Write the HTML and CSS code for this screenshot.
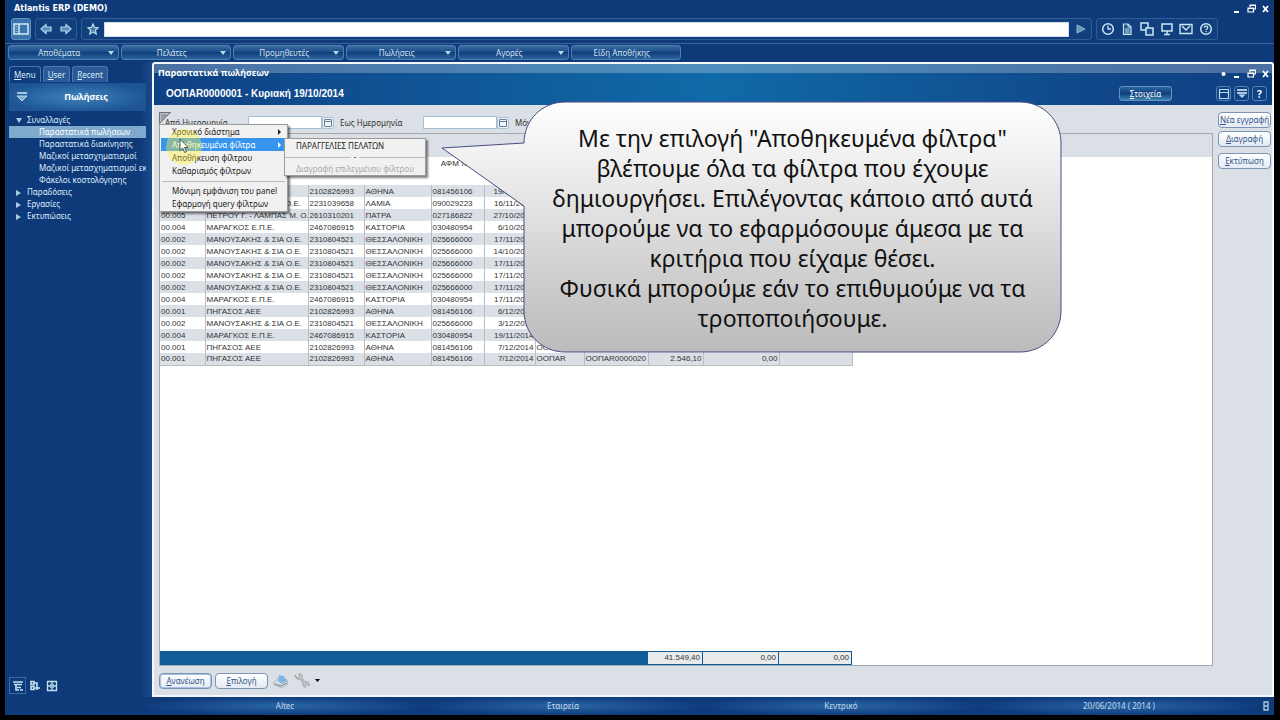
FILE: index.html
```
<!DOCTYPE html>
<html lang="el">
<head>
<meta charset="utf-8">
<title>Atlantis ERP (DEMO)</title>
<link rel="stylesheet" href="styles.css">
</head>
<body>
<svg class="defs" aria-hidden="true">
  <symbol id="i-min" viewBox="0 0 9 9"><path d="M1 8h5" stroke="currentColor" stroke-width="2" fill="none"/></symbol>
  <symbol id="i-restore" viewBox="0 0 9 9"><path d="M3 3V1h5.500v4H6.500M1 4h5.500v4H1zM3 1.500h5.500M1 4.500h5.500" stroke="currentColor" stroke-width="1.200" fill="none"/></symbol>
  <symbol id="i-close" viewBox="0 0 9 9"><path d="M2 2l5 6M7 2l-5 6" stroke="currentColor" stroke-width="1.800" fill="none"/></symbol>
  <symbol id="i-arrow" viewBox="0 0 12 12"><path d="M1 6L6 1.500v2.500h5v4H6v2.500z" fill="#5c8fb8" stroke="#b5d5ea" stroke-width="1.200"/></symbol>
  <symbol id="i-cal" viewBox="0 0 12 12"><rect x=".5" y=".5" width="11" height="11" rx="1.500" fill="#edf4f9" stroke="#a9c2d6"/><path d="M2.500 2.500h7v7h-7zM2.500 4.500h7" fill="none" stroke="#6c7f94"/></symbol>
</svg>
<div class="app">
  <header class="titlebar">
    <h1>Atlantis ERP (DEMO)</h1>
    <div class="winctl">
      <button aria-label="Minimize"><svg><use href="#i-min"/></svg></button>
      <button aria-label="Restore"><svg><use href="#i-restore"/></svg></button>
      <button aria-label="Close"><svg><use href="#i-close"/></svg></button>
    </div>
  </header>

  <div class="toolbar">
    <button class="panel-toggle" aria-label="Panel"><svg viewBox="0 0 16 12"><path d="M1 1h14v10H1zM6 1v10" fill="none" stroke="#d5eaf6" stroke-width="1.500"/><path d="M2.500 3.500h2M2.500 6h2M2.500 8.500h2" stroke="#9cc6e0"/></svg></button>
    <div class="group nav">
      <button aria-label="Back"><svg><use href="#i-arrow"/></svg></button>
      <button aria-label="Forward"><svg class="flip"><use href="#i-arrow"/></svg></button>
    </div>
    <div class="group address">
      <button aria-label="Favorite"><svg viewBox="0 0 12 12"><path d="M6 1l1.500 3.500 3.500.3-2.700 2.400.9 3.800L6 9l-3.200 2 .9-3.800L1 4.800l3.500-.3z" fill="#47799f" stroke="#b5d5ea" stroke-width="1.300"/></svg></button>
      <input type="text" aria-label="Address">
      <button aria-label="Go"><svg viewBox="0 0 12 12"><path d="M2 2l8 4-8 4z" fill="#6897b7" stroke="#8db7d0"/></svg></button>
    </div>
    <div class="group tools">
      <button aria-label="History"><svg viewBox="0 0 14 14"><circle cx="7" cy="7" r="5.300" fill="none" stroke="#cbe6f2" stroke-width="1.500"/><path d="M7 3.500V7h3" fill="none" stroke="#cbe6f2" stroke-width="1.300"/></svg></button>
      <button aria-label="Document"><svg viewBox="0 0 14 14"><path d="M3.500 2H8l3 3v7.500H3.500z" fill="#1d558f" stroke="#cbe6f2" stroke-width="1.200"/><path d="M8 2v3h3M5 7h4.500M5 9h4.500M5 11h4.500" fill="none" stroke="#cbe6f2"/></svg></button>
      <button aria-label="Windows"><svg viewBox="0 0 14 14"><path d="M1 1h7v7H1z" fill="none" stroke="#cbe6f2" stroke-width="1.500"/><path d="M6 6h7v7H6z" fill="#1d4c8b" stroke="#cbe6f2" stroke-width="1.500"/></svg></button>
      <button aria-label="Desktop"><svg viewBox="0 0 14 14"><path d="M2 2h10v7H2zM7 9v3M4 12.500h6" fill="none" stroke="#cbe6f2" stroke-width="1.500"/></svg></button>
      <button aria-label="Mail"><svg viewBox="0 0 14 14"><path d="M1 2.500h12v9H1zM3 4l4 4 4-4" fill="none" stroke="#cbe6f2" stroke-width="1.400"/></svg></button>
      <button aria-label="Help"><svg viewBox="0 0 14 14"><circle cx="7" cy="7" r="5.300" fill="none" stroke="#cbe6f2" stroke-width="1.500"/><path d="M5.300 5.800c0-2.300 3.500-2.200 3.500-.1C8.800 6.900 7 6.900 7 8.200M7 9v1.300" fill="none" stroke="#cbe6f2" stroke-width="1.200"/></svg></button>
    </div>
  </div>

  <nav class="menubar">
    <button class="drop">Αποθέματα</button>
    <button class="drop">Πελάτες</button>
    <button class="drop">Προμηθευτές</button>
    <button class="drop">Πωλήσεις</button>
    <button class="drop">Αγορές</button>
    <button>Είδη Αποθήκης</button>
  </nav>

  <div class="workspace">
    <aside class="sidebar">
      <div class="tabs">
        <button class="on"><u>M</u>enu</button>
        <button><u>U</u>ser</button>
        <button><u>R</u>ecent</button>
      </div>
      <div class="section">
        <svg viewBox="0 0 12 10"><path d="M1 1h10" stroke="#d5eaf6" stroke-width="1.500"/><path d="M1 4h10L6 9z" fill="#7fb0d0" stroke="#b5d8ea"/></svg>
        <h2>Πωλήσεις</h2>
      </div>
      <ul class="tree">
        <li class="open">Συναλλαγές
          <ul>
            <li class="sel">Παραστατικά πωλήσεων</li>
            <li>Παραστατικά διακίνησης</li>
            <li>Μαζικοί μετασχηματισμοί</li>
            <li>Μαζικοί μετασχηματισμοί εκκ</li>
            <li>Φάκελοι κοστολόγησης</li>
          </ul>
        </li>
        <li class="shut">Παραδόσεις</li>
        <li class="shut">Εργασίες</li>
        <li class="shut">Εκτυπώσεις</li>
      </ul>
      <div class="views">
        <button class="on" aria-label="Tree view"><svg viewBox="0 0 12 12"><path d="M1 2h10M2 4.500h8M4 5v5h3M5 7.500h4M8 10h3" fill="none" stroke="#c5e3ee" stroke-width="1.600"/></svg></button>
        <button aria-label="List view"><svg viewBox="0 0 12 12"><path d="M2 1.500h3v3H2zM2 6.500h3v3H2zM5 3h3v5M6 8h5M8 6v4" fill="none" stroke="#c5e3ee" stroke-width="1.600"/></svg></button>
        <button aria-label="Expand"><svg viewBox="0 0 12 12"><path d="M1.500 1.500h9v9h-9zM6 1v3M6 8v3M1 6h3M8 6h3" fill="none" stroke="#c5e3ee" stroke-width="1.300"/><path d="M4 4h4v4H4z" fill="#8fc0d2"/></svg></button>
      </div>
    </aside>

    <main class="doc">
      <div class="doc-title">
        <h2>Παραστατικά πωλήσεων</h2>
        <div class="winctl">
          <button aria-label="Pin"><svg viewBox="0 0 9 9"><circle cx="4.500" cy="5" r="2" fill="currentColor"/></svg></button>
          <button aria-label="Minimize"><svg><use href="#i-min"/></svg></button>
          <button aria-label="Restore"><svg><use href="#i-restore"/></svg></button>
          <button aria-label="Close"><svg><use href="#i-close"/></svg></button>
        </div>
      </div>
      <div class="doc-head">
        <h3>ΟΟΠΑR0000001 - Κυριακή 19/10/2014</h3>
        <button class="details"><u>Σ</u>τοιχεία</button>
        <div class="head-icons">
          <button aria-label="Layout"><svg viewBox="0 0 12 12"><path d="M1.500 1.500h9v9h-9zM1.500 4.500h9" fill="none" stroke="#b9d9ec" stroke-width="1.200"/></svg></button>
          <button aria-label="Filter"><svg viewBox="0 0 12 12"><path d="M1 2h10M1 5h10" stroke="#e3f2fa" stroke-width="1.400"/><path d="M2.500 6.500h7L6 10z" fill="#b9d9ec"/></svg></button>
          <button aria-label="Help">?</button>
        </div>
      </div>
      <div class="doc-body">
        <div class="main-col">
          <form class="filters">
            <svg class="corner" viewBox="0 0 12 12"><path d="M.5.5h11L.5 11.500z" fill="#b9bec4" stroke="#6c7178"/><path d="M2 3h6M2 5h4M2 7h2" stroke="#777"/></svg>
            <label for="from">Από Ημερομηνία</label>
            <input id="from" type="text"><button type="button" aria-label="Calendar"><svg><use href="#i-cal"/></svg></button>
            <label for="to">Εως Ημερομηνία</label>
            <input id="to" type="text"><button type="button" aria-label="Calendar"><svg><use href="#i-cal"/></svg></button>
            <label>Μόν</label>
          </form>
          <div class="grid">
            <div class="band"></div>
            <table>
              <colgroup><col class="c1"><col class="c2"><col class="c3"><col class="c4"><col class="c5"><col class="c6"><col class="c7"><col class="c8"><col class="c9"><col class="c10"><col class="c11"></colgroup>
              <thead><tr><th></th><th></th><th></th><th></th><th>ΑΦΜ πελ</th><th></th><th></th><th></th><th></th><th></th><th></th></tr></thead>
              <tbody id="rows"></tbody>
            </table>
            <div class="totals"><span></span><output>41.549,40</output><output>0,00</output><output>0,00</output></div>
          </div>
          <div class="actions">
            <button class="pill focus"><u>Α</u>νανέωση</button>
            <button class="pill"><u>Ε</u>πιλογή</button>
            <button class="ico" aria-label="Print"><svg viewBox="0 0 16 16"><path d="M1 9l6-5 7 3 1 4-6 4-8-3z" fill="#d9dde0" stroke="#a5abb1" stroke-width=".7"/><path d="M6 2l5 1 3 5-5 3-4-3z" fill="#7db9e4"/><path d="M2 11l6 2 6-3" stroke="#7b8289" fill="none"/></svg></button>
            <button class="ico wide" aria-label="Tools"><svg viewBox="0 0 16 16"><path d="M1 2l3 3 2-2-2-2c4-1 5 2 4 4l3 4c3-1 5 1 4 4l-2-2-2 2 1 1c-3 0-4-2-3-4L6 6C3 7 1 5 1 2z" fill="#c3c5c7" stroke="#8f9397" stroke-width=".7"/></svg><svg class="caret" viewBox="0 0 5 3"><path d="M0 0h5L2.500 3z"/></svg></button>
          </div>
        </div>
        <div class="side-actions">
          <button class="pill"><u>Ν</u>έα εγγραφή</button>
          <button class="pill"><u>Δ</u>ιαγραφή</button>
          <button class="pill last"><u>Ε</u>κτύπωση</button>
        </div>
        <div class="menu">
          <button class="more">Χρονικό διάστημα</button>
          <button class="more hot">Αποθηκευμένα φίλτρα</button>
          <button>Αποθήκευση φίλτρου</button>
          <button>Καθαρισμός φίλτρων</button>
          <hr>
          <button>Μόνιμη εμφάνιση του panel</button>
          <button>Εφαρμογή query φίλτρων</button>
          <div class="submenu">
            <button>ΠΑΡΑΓΓΕΛΙΕΣ ΠΕΛΑΤΩΝ</button>
            <div class="sep">-</div>
            <button disabled>Διαγραφή επιλεγμένου φίλτρου</button>
          </div>
          <div class="halo"></div>
          <svg class="cursor" viewBox="0 0 10 16"><path d="M1 1v11.500l2.700-2.500 2 4.500 1.800-.8-2-4.200H9z" fill="#fff" stroke="#333" stroke-width=".8"/></svg>
        </div>
        <div class="bubble">
          <svg viewBox="0 0 622 253"><defs><linearGradient id="bg" x1="0" y1="0" x2="0" y2="1"><stop offset="0" stop-color="#fff"/><stop offset=".2" stop-color="#f2f2f2"/><stop offset=".85" stop-color="#c4c4c4"/><stop offset="1" stop-color="#bcbcbc"/></linearGradient></defs><path d="M83 42C83 19 101 1 124 1H579C602 1 620 19 620 42V210C620 233 602 251 579 251H124C101 251 83 233 83 210V105L1 47L83 42Z" fill="url(#bg)" stroke="#4b4a83"/></svg>
          <p>Με την επιλογή "Αποθηκευμένα φίλτρα"<br>βλέπουμε όλα τα φίλτρα που έχουμε<br>δημιουργήσει. Επιλέγοντας κάποιο από αυτά<br>μπορούμε να το εφαρμόσουμε άμεσα με τα<br>κριτήρια που είχαμε θέσει.<br>Φυσικά μπορούμε εάν το επιθυμούμε να τα<br>τροποποιήσουμε.</p>
        </div>
      </div>
    </main>
  </div>

  <footer class="status">
    <span>Altec</span><span>Εταιρεία</span><span>Κεντρικό</span><span>20/06/2014 ( 2014 )</span>
    <svg viewBox="0 0 6 10"><path d="M1 1h4v8H1zM1 5h4" fill="none" stroke="#a9cbe4" stroke-width="1.300"/></svg>
  </footer>
</div>
<script src="rows.js"></script>
</body>
</html>
```
FILE: styles.css
```
* { box-sizing: border-box; }
html, body { margin: 0; height: 100%; background: #000; }
body { font: 8px/12px "Noto Sans", "Open Sans", sans-serif; color: #333; }
h1, h2, h3, p, ul { margin: 0; padding: 0; font-size: inherit; }
ul { list-style: none; }
button { font: inherit; color: inherit; margin: 0; padding: 0; border: 0; background: none; display: flex; align-items: center; justify-content: center; white-space: nowrap; }
input { font: inherit; margin: 0; padding: 0 2px; border: 1px solid #a5bfd4; background: #fff; min-width: 0; border-radius: 0; }
svg { display: block; }
.defs { position: absolute; width: 0; height: 0; }

.app { height: 100vh; padding: 0 6px 5px 5px; display: flex; flex-direction: column; }
.app > * { background: #0e3a7a; }
.titlebar { height: 18px; flex: none; display: flex; align-items: center; justify-content: space-between; padding: 0 4px 2px 9px; color: #fff; }
.titlebar h1 { font: bold 9px/14px "DejaVu Sans Condensed", "Noto Sans", sans-serif; }
.winctl { display: flex; gap: 5px; color: #fff; }
.winctl svg { width: 9px; height: 9px; }

.toolbar { flex: none; height: 26px; display: flex; gap: 4px; padding: 0 56px 3px 6px; border-bottom: 1px solid #3d6299; }
.group, .panel-toggle { border: 1px solid #315c95; border-radius: 3px; display: flex; align-items: center; background: #123f7e; }
.panel-toggle { width: 20px; background: #3b74ab; border-color: #5d93c3; }
.panel-toggle svg { width: 16px; height: 12px; }
.nav { width: 42px; justify-content: space-around; }
.nav svg, .address svg { width: 12px; height: 12px; }
.flip { transform: scaleX(-1); }
.address { flex: 1; gap: 5px; padding: 0 3px 0 5px; }
.address input { flex: 1; height: 15px; border-color: #cfdcec; }
.address button:last-child { width: 14px; }
.tools { width: 122px; justify-content: space-around; padding: 0 1px; }
.tools svg { width: 14px; height: 14px; }

.menubar { flex: none; display: grid; grid-template-columns: repeat(6, 1fr); gap: 2px; padding: 1px 593px 2px 3px; color: #d3e4f2; }
.menubar button { position: relative; height: 15px; padding-right: 8px; border: 1px solid #4d7fb2; border-radius: 3px; background: linear-gradient(#3a6da3, #1c4c88 45%, #123f7c 50%, #2a649d); }
.menubar .drop::after { content: ""; position: absolute; right: 4px; top: 5px; border: 3px solid transparent; border-top: 4px solid #b5d9e8; border-bottom: 0; }

.workspace { flex: 1; min-height: 0; display: flex; }
.sidebar { width: 147px; flex: none; display: flex; flex-direction: column; padding: 4px 6px 3px 4px; color: #dbeafa; background: linear-gradient(90deg, #0e3a7a 92%, #1a4a8a); }
.tabs { display: flex; gap: 2px; }
.tabs button { height: 16px; padding: 0 4px; border: 1px solid #4a78ac; border-bottom: 0; border-radius: 3px 3px 0 0; background: #2a5b96; }
.tabs .on { background: #103c7b; }
.section { height: 28px; margin-top: 1px; display: flex; align-items: center; background: radial-gradient(ellipse at center, #3f83bb, #1d5593 75%); padding-left: 7px; color: #fff; }
.section svg { width: 12px; height: 10px; }
.section h2 { flex: 1; text-align: center; font: bold 9px/12px "Noto Sans", sans-serif; padding-right: 2px; }
.tree { margin-top: 3px; overflow: hidden; white-space: nowrap; }
.tree > li { padding-left: 18px; position: relative; }
.tree > li::before { content: ""; position: absolute; left: 7px; top: 4px; border: 3px solid transparent; border-left: 5px solid #a9cbe6; border-right: 0; }
.tree > .open::before { border: 3px solid transparent; border-top: 5px solid #a9cbe6; border-bottom: 0; }
.tree ul { margin-left: -18px; }
.tree ul li { padding-left: 30px; overflow: hidden; }
.tree .sel { background: #7fa9cd; color: #fff; }
.views { margin-top: auto; display: flex; }
.views button { width: 17px; height: 17px; border: 1px solid transparent; }
.views .on { border-color: #3a6ba3; }
.views svg { width: 12px; height: 12px; }

.doc { flex: 1; min-width: 0; display: flex; flex-direction: column; border: 2px solid #f4f8fc; border-radius: 3px 3px 0 0; background: linear-gradient(90deg, #0f4083, #106aa8 50%, #104788 85%, #0f4083); }
.doc-title { flex: none; height: 18px; display: flex; align-items: center; justify-content: space-between; padding: 0 2px 0 4px; color: #fff; background: linear-gradient(rgba(255,255,255,.25) 9px, transparent 9px); }
.doc-title h2 { font: bold 9px/12px "Noto Sans", sans-serif; }
.doc-head { flex: none; height: 23px; display: flex; align-items: center; padding: 0 5px 0 12px; color: #fff; }
.doc-head h3 { flex: 1; font: bold 10px/14px "Liberation Sans", sans-serif; }
.details { width: 53px; height: 15px; margin-right: 44px; border: 1px solid #6593c0; border-radius: 3px; background: linear-gradient(#2a659f, #103f7b 50%, #3b82b5); }
.head-icons { display: flex; gap: 3px; font-weight: bold; font-size: 10px; }
.head-icons button { width: 15px; height: 15px; border: 1px solid #5482b2; border-radius: 3px; }
.head-icons svg { width: 12px; height: 12px; }

.doc-body { position: relative; flex: 1; min-height: 0; display: flex; background: #dbe0e6; }
.main-col { flex: 1; min-width: 0; display: flex; flex-direction: column; padding-left: 5px; }
.filters { flex: none; position: relative; height: 28px; display: flex; align-items: center; padding: 7px 0 0 6px; white-space: nowrap; overflow: hidden; }
.filters label { width: 83px; }
.filters input { width: 74px; height: 13px; }
.filters svg { width: 12px; height: 12px; }
.filters button + label { margin-left: 6px; }
.corner { position: absolute; left: 0; top: 7px; }
.grid { flex: 1; min-height: 0; border: 1px solid #a2a9b1; background: #fff; display: flex; flex-direction: column; }
.band { height: 23px; flex: none; background: #dbe0e6; }
table { border-collapse: collapse; table-layout: fixed; width: 692px; font: 8px/12px "Liberation Sans", sans-serif; color: #333; }
th { height: 28px; padding: 0 4px 14px; font-weight: normal; white-space: nowrap; }
td { height: 12px; padding: 0 1px; line-height: 11px; white-space: nowrap; overflow: hidden; border-right: 1px solid #b9bec5; }
tbody tr:nth-child(odd) { background: #dbe0e7; }
tbody tr:last-child { border-bottom: 1px solid #b9bec5; }
td:nth-child(6), td:nth-child(n+9) { text-align: right; }
.c1 { width: 45px; } .c2 { width: 103px; } .c3 { width: 56px; } .c4 { width: 67px; } .c5 { width: 53px; } .c6 { width: 51px; }
.c7 { width: 49px; } .c8 { width: 64px; } .c9 { width: 55px; } .c10 { width: 76px; } .c11 { width: 73px; }
.totals { margin-top: auto; width: 692px; height: 14px; display: grid; grid-template-columns: 1fr 54px 75px 72px; gap: 1px; padding: 1px; background: #115b96; font: 8px/12px "Liberation Sans", sans-serif; }
.totals output { background: #e9eaeb; text-align: right; padding-right: 2px; }
.actions { flex: none; height: 29px; display: flex; align-items: center; gap: 3px; }
.pill { height: 16px; width: 53px; border: 1px solid #7b93b5; border-radius: 4px; background: linear-gradient(#fff, #e3eaf2); color: #34568c; }
.pill.focus { box-shadow: inset 0 0 0 1px #a9c0e2; }
.ico svg { width: 16px; height: 16px; margin-left: 2px; }
.ico .caret { width: 5px; height: 3px; margin-left: 5px; }
.side-actions { flex: none; width: 59px; padding: 7px 1px 0 5px; display: flex; flex-direction: column; gap: 3px; }
.side-actions .last { margin-top: 3px; }

.menu, .submenu { position: absolute; background: #f1f1f1; border: 1px solid #9b9b9b; box-shadow: 2px 2px 2px rgba(0,0,0,.5); color: #222; }
.menu { left: 5px; top: 19px; width: 129px; padding: 0 1px 1px; }
.menu button { width: 100%; height: 13px; padding-left: 11px; justify-content: flex-start; position: relative; }
.menu hr { border: 0; border-top: 1px solid #bbb; margin: 4px 1px 2px; }
.menu .more::after { content: ""; position: absolute; right: 5px; top: 4px; border: 3px solid transparent; border-left: 3px solid currentColor; border-right: 0; }
.menu .hot { background: #3595ef; color: #fff; }
.submenu { left: 124px; top: 13px; width: 142px; }
.submenu button:disabled { color: #aaa; }
.submenu .sep { display: flex; align-items: center; gap: 3px; height: 10px; }
.submenu .sep::before, .submenu .sep::after { content: ""; flex: 1; border-top: 1px solid #bbb; }
.halo { position: absolute; left: 6px; top: 4px; width: 36px; height: 36px; border-radius: 50%; background: rgba(255, 240, 60, .4); }
.cursor { position: absolute; left: 19px; top: 13px; width: 10px; height: 16px; }

.bubble { position: absolute; left: 287px; top: -4px; width: 622px; }
.bubble svg { width: 622px; height: 253px; }
.bubble p { position: absolute; left: 83px; right: 2px; top: 22px; text-align: center; font: 23px/30px "Noto Sans", sans-serif; color: #111; white-space: nowrap; }

.status { flex: none; height: 18px; display: flex; align-items: center; padding: 0 5px 0 141px; color: #c3d9ec; }
.status span { flex: 1; text-align: center; line-height: 18px; background: radial-gradient(ellipse at center, #2a66a5, #0e3a7a 75%); }
.status svg { width: 6px; height: 10px; margin-left: 5px; }
```
FILE: rows.js
```
const P = ['00.001', 'ΠΗΓΑΣΟΣ ΑΕΕ', '2102826993', 'ΑΘΗΝΑ', '081456106'];
const L = ['00.003', 'ΛΑΜΠΡΟΥ & ΥΙΟΙ Μ. Ο.Ε.', '2231039658', 'ΛΑΜΙΑ', '090029223'];
const T = ['00.005', 'ΠΕΤΡΟΥ Γ. - ΛΑΜΠΑΣ Μ. Ο.Ε.', '2610310201', 'ΠΑΤΡΑ', '027186822'];
const K = ['00.004', 'ΜΑΡΑΓΚΟΣ Ε.Π.Ε.', '2467086915', 'ΚΑΣΤΟΡΙΑ', '030480954'];
const M = ['00.002', 'ΜΑΝΟΥΣΑΚΗΣ & ΣΙΑ Ο.Ε.', '2310804521', 'ΘΕΣΣΑΛΟΝΙΚΗ', '025666000'];
const rows = [
  [P, '19/10/2014'], [L, '16/11/2014'], [T, '27/10/2014'], [K, '6/10/2014'],
  [M, '17/11/2014'], [M, '14/10/2014'], [M, '17/11/2014'], [M, '17/11/2014'],
  [M, '17/11/2014'], [K, '17/11/2014'], [P, '6/12/2014'], [M, '3/12/2014'],
  [K, '19/11/2014'], [P, '7/12/2014', 'ΟΟΠΑR'],
  [P, '7/12/2014', 'ΟΟΠΑR', 'ΟΟΠΑR0000020', '2.546,10', '0,00']
];
const body = document.getElementById('rows');
for (const [customer, ...rest] of rows) {
  const tr = body.insertRow();
  const cells = [...customer, ...rest];
  for (let i = 0; i < 11; i++) tr.insertCell().textContent = cells[i] || '';
}
```
